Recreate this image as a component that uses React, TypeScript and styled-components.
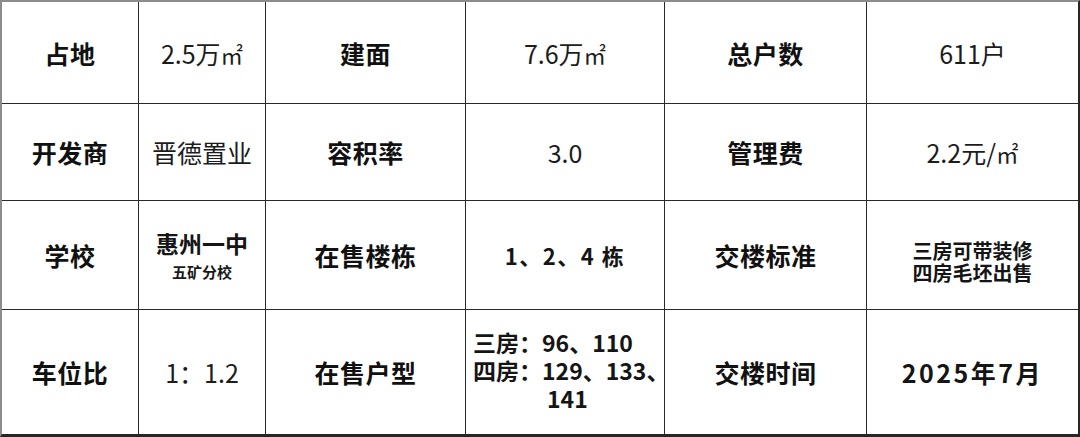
import React from "react";
import styled, { createGlobalStyle } from "styled-components";

const GlobalStyle = createGlobalStyle`
  html, body {
    margin: 0;
    padding: 0;
    background: #ffffff;
  }
  body {
    font-family: "Noto Sans CJK SC", "Noto Sans", sans-serif;
    color: #1a1a1a;
  }
`;

const Frame = styled.div`
  width: 1080px;
  height: 437px;
  box-sizing: border-box;
  border-top: 2px solid #8c8c8c;
  border-left: 2px solid #8c8c8c;
  border-right: 2px solid #262626;
  border-bottom: 3px solid #262626;
  box-shadow: inset 0 -1px 0 #262626;
  background: #2a2a2a;
  overflow: hidden;
`;

const Grid = styled.div`
  display: grid;
  grid-template-columns: 136px 126px 199px 198px 201px 211px;
  grid-template-rows: 101px 96px 108px 124px;
  gap: 1px;
  height: 100%;
`;

const Cell = styled.div<{ $align?: "center" | "left" }>`
  background: #ffffff;
  display: flex;
  flex-direction: column;
  align-items: ${(p) => (p.$align === "left" ? "flex-start" : "center")};
  justify-content: center;
  text-align: ${(p) => (p.$align === "left" ? "left" : "center")};
  padding: ${(p) => (p.$align === "left" ? "0 0 0 7px" : "0")};
  box-sizing: border-box;
`;

const Label = styled.span`
  font-size: 25px;
  font-weight: 700;
  color: #111111;
  letter-spacing: 0.5px;
`;

const Value = styled.span`
  font-size: 25px;
  font-weight: 400;
  color: #1c1c1c;
`;

const StrongValue = styled.span<{ $size?: number; $spacing?: number }>`
  font-size: ${(p) => p.$size ?? 22}px;
  font-weight: 700;
  color: #151515;
  letter-spacing: ${(p) => p.$spacing ?? 0}px;
  line-height: 1.3;
`;

const TwoLines = styled.span`
  font-size: 20px;
  font-weight: 700;
  color: #151515;
  line-height: 22px;
  margin-top: 14px;
`;

const SubNote = styled.span`
  font-size: 15px;
  font-weight: 700;
  color: #1a1a1a;
  margin-top: 4px;
  line-height: 1.2;
`;

const LineStack = styled.div`
  display: flex;
  flex-direction: column;
  font-size: 23px;
  font-weight: 700;
  color: #151515;
  line-height: 28px;
  margin-top: -5px;
  white-space: nowrap;
`;

const Indent = styled.span`
  padding-left: 74px;
`;

const Sup = styled.span`
  font-size: 0.9em;
`;

export default function App() {
  return (
    <>
      <GlobalStyle />
      <Frame>
        <Grid>
          <Cell><Label>占地</Label></Cell>
          <Cell><Value>2.5万<Sup>㎡</Sup></Value></Cell>
          <Cell><Label>建面</Label></Cell>
          <Cell><Value>7.6万<Sup>㎡</Sup></Value></Cell>
          <Cell><Label>总户数</Label></Cell>
          <Cell><Value>611户</Value></Cell>

          <Cell><Label>开发商</Label></Cell>
          <Cell><Value>晋德置业</Value></Cell>
          <Cell><Label>容积率</Label></Cell>
          <Cell><Value>3.0</Value></Cell>
          <Cell><Label>管理费</Label></Cell>
          <Cell><Value>2.2元/<Sup>㎡</Sup></Value></Cell>

          <Cell><Label>学校</Label></Cell>
          <Cell>
            <StrongValue $size={23}>惠州一中</StrongValue>
            <SubNote>五矿分校</SubNote>
          </Cell>
          <Cell><Label>在售楼栋</Label></Cell>
          <Cell><StrongValue $size={22} $spacing={1.5}>1、2、4 栋</StrongValue></Cell>
          <Cell><Label>交楼标准</Label></Cell>
          <Cell>
            <TwoLines>
              三房可带装修
              <br />
              四房毛坯出售
            </TwoLines>
          </Cell>

          <Cell><Label>车位比</Label></Cell>
          <Cell><Value>1：1.2</Value></Cell>
          <Cell><Label>在售户型</Label></Cell>
          <Cell $align="left">
            <LineStack>
              <span>三房：96、110</span>
              <span>四房：129、133、</span>
              <Indent>141</Indent>
            </LineStack>
          </Cell>
          <Cell><Label>交楼时间</Label></Cell>
          <Cell><StrongValue $size={25} $spacing={2.5}>2025年7月</StrongValue></Cell>
        </Grid>
      </Frame>
    </>
  );
}
